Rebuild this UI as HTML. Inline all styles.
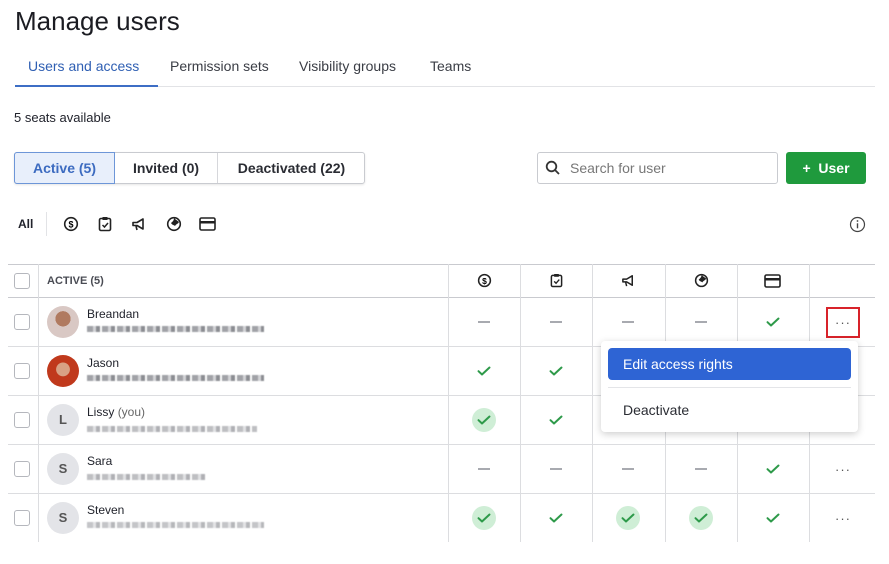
<!DOCTYPE html>
<html><head><style>
*{box-sizing:border-box;margin:0;padding:0}
body{width:889px;height:564px;background:#fff;font-family:"Liberation Sans",Arial,sans-serif;color:#21232c;position:relative;overflow:hidden}
.a{position:absolute}
.t{font-size:14px;color:#3a3d45}
.hl{position:absolute;left:8px;width:867px;height:1px;background:#dcdde0}
.vl{position:absolute;width:1px;background:#dcdde0}
.cb{position:absolute;left:14px;width:16px;height:16px;border:1.5px solid #b5b7bd;border-radius:3px;background:#fff}
.av{position:absolute;left:47px;width:32px;height:32px;border-radius:50%;background:#e3e4e8;color:#555;font-size:13px;font-weight:bold;text-align:center;line-height:32px}
.nm{position:absolute;left:87px;font-size:12px;color:#21232c}
.em{position:absolute;left:87px;height:6px;background:repeating-linear-gradient(90deg,#8a8c92 0 6px,#c8c9cd 6px 9px,#6f7178 9px 13px,#fff 13px 15px);filter:blur(0.6px);opacity:.8}
.c{position:absolute;width:72px;height:24px;display:flex;align-items:center;justify-content:center;font-size:13px}
.dash{width:12px;height:1.5px;background:#a8aab0}
.ck{width:14px;height:10px}
.cc{width:24px;height:24px;border-radius:50%;background:#cfeed6;display:flex;align-items:center;justify-content:center}
.dots{color:#555;font-size:13px;letter-spacing:1px}
</style></head><body>
<svg width="0" height="0" style="position:absolute"><defs><symbol id="k" viewBox="0 0 14 10"><path d="M1.5 5.2l3.5 3.3L12.5 1.5" fill="none" stroke="#2e9a4a" stroke-width="2" stroke-linecap="round" stroke-linejoin="round"/></symbol></defs></svg>
<div class="a" style="left:15px;top:6px;font-size:26px;color:#1b1c22">Manage users</div>
<div class="a" style="left:28px;top:58px;font-size:14px;color:#2f5fb3">Users and access</div>
<div class="a t" style="left:170px;top:58px">Permission sets</div>
<div class="a t" style="left:299px;top:58px">Visibility groups</div>
<div class="a t" style="left:430px;top:58px">Teams</div>
<div class="a" style="left:15px;top:86px;width:860px;height:1px;background:#e2e3e6"></div>
<div class="a" style="left:15px;top:85px;width:143px;height:2px;background:#3d6ec5"></div>
<div class="a" style="left:14px;top:110px;font-size:13px;color:#21232c">5 seats available</div>

<div class="a" style="left:14px;top:152px;width:351px;height:32px;border:1px solid #c9cbd0;border-radius:3px;box-shadow:0 1px 2px rgba(0,0,0,.1)"></div>
<div class="a" style="left:14px;top:152px;width:101px;height:32px;border:1px solid #6d96d8;border-radius:3px 0 0 3px;background:#e8effb;color:#3c6bc0;font-size:14px;font-weight:bold;text-align:center;line-height:30px">Active (5)</div>
<div class="a" style="left:115px;top:153px;width:103px;height:30px;border-right:1px solid #d6d7db;font-size:14px;font-weight:bold;text-align:center;line-height:30px;color:#2a2c33">Invited (0)</div>
<div class="a" style="left:218px;top:153px;width:147px;height:30px;font-size:14px;font-weight:bold;text-align:center;line-height:30px;color:#2a2c33">Deactivated (22)</div>

<div class="a" style="left:537px;top:152px;width:241px;height:32px;border:1px solid #c9cbd0;border-radius:3px"></div>
<svg class="a" style="left:545px;top:160px" width="16" height="16" viewBox="0 0 16 16"><circle cx="6.5" cy="6.5" r="4.8" fill="none" stroke="#333" stroke-width="1.8"/><path d="M10 10l4 4" stroke="#333" stroke-width="1.8"/></svg>
<div class="a" style="left:570px;top:160px;font-size:14px;color:#777">Search for user</div>
<div class="a" style="left:786px;top:152px;width:80px;height:32px;background:#1f9a3d;border-radius:3px;color:#fff;font-size:14px;font-weight:bold;line-height:32px;text-align:center">+&nbsp; User</div>

<div class="a" style="left:18px;top:217px;font-size:12px;font-weight:bold">All</div>
<div class="a" style="left:46px;top:212px;width:1px;height:24px;background:#e2e3e6"></div>
<svg class="a" style="left:63px;top:216px" width="16" height="16" viewBox="0 0 16 16"><circle cx="8" cy="8" r="6.3" fill="none" stroke="#222" stroke-width="1.6"/><text x="8" y="11.5" font-size="9" font-weight="bold" text-anchor="middle" font-family="Liberation Sans">$</text></svg>
<svg class="a" style="left:98px;top:216px" width="14" height="16" viewBox="0 0 14 16"><rect x="1.5" y="2.5" width="11" height="12" rx="1.5" fill="none" stroke="#222" stroke-width="1.6"/><rect x="4.5" y="1" width="5" height="3" fill="#222"/><path d="M4.5 9l2 2 3.5-4" fill="none" stroke="#222" stroke-width="1.5"/></svg>
<svg class="a" style="left:131px;top:216px" width="16" height="16" viewBox="0 0 16 16"><path d="M2 6.5h4l6-3.5v10l-6-3.5H2z" fill="none" stroke="#222" stroke-width="1.6" stroke-linejoin="round"/><path d="M5 10l1 4" stroke="#222" stroke-width="1.6"/></svg>
<svg class="a" style="left:166px;top:216px" width="16" height="16" viewBox="0 0 16 16"><circle cx="8" cy="8" r="6.3" fill="none" stroke="#222" stroke-width="1.6"/><path d="M8 2c2 2 4 3 5 4-1 2-3 2-4 4-1-1-3-1-4-3 1-1 3-2 3-5z" fill="#222"/></svg>
<svg class="a" style="left:199px;top:217px" width="17" height="14" viewBox="0 0 17 14"><rect x="1" y="1" width="15" height="12" rx="1.5" fill="none" stroke="#222" stroke-width="1.6"/><rect x="1" y="4" width="15" height="2.5" fill="#222"/></svg>
<svg class="a" style="left:849px;top:216px" width="17" height="17" viewBox="0 0 17 17"><circle cx="8.5" cy="8.5" r="7" fill="none" stroke="#444" stroke-width="1.2"/><rect x="7.8" y="7.3" width="1.4" height="5" fill="#444"/><circle cx="8.5" cy="5" r=".9" fill="#444"/></svg>

<div class="hl" style="top:264px;background:#c9cacf"></div>
<div class="hl" style="top:297px;background:#c9cacf"></div>
<div class="hl" style="top:346px"></div>
<div class="hl" style="top:395px"></div>
<div class="hl" style="top:444px"></div>
<div class="hl" style="top:493px"></div>
<div class="vl" style="left:38px;top:264px;height:278px"></div>
<div class="vl" style="left:448px;top:264px;height:278px"></div>
<div class="vl" style="left:520px;top:264px;height:278px"></div>
<div class="vl" style="left:592px;top:264px;height:278px"></div>
<div class="vl" style="left:665px;top:264px;height:278px"></div>
<div class="vl" style="left:737px;top:264px;height:278px"></div>
<div class="vl" style="left:809px;top:264px;height:278px"></div>

<div class="cb" style="top:273px"></div>
<div class="a" style="left:47px;top:275px;font-size:11px;font-weight:bold;color:#4a4c54">ACTIVE (5)</div>
<svg class="a" style="left:477px;top:273px" width="15" height="15" viewBox="0 0 16 16"><circle cx="8" cy="8" r="6.3" fill="none" stroke="#222" stroke-width="1.6"/><text x="8" y="11.5" font-size="9" font-weight="bold" text-anchor="middle" font-family="Liberation Sans">$</text></svg>
<svg class="a" style="left:550px;top:273px" width="13" height="15" viewBox="0 0 14 16"><rect x="1.5" y="2.5" width="11" height="12" rx="1.5" fill="none" stroke="#222" stroke-width="1.6"/><rect x="4.5" y="1" width="5" height="3" fill="#222"/><path d="M4.5 9l2 2 3.5-4" fill="none" stroke="#222" stroke-width="1.5"/></svg>
<svg class="a" style="left:621px;top:273px" width="15" height="15" viewBox="0 0 16 16"><path d="M2 6.5h4l6-3.5v10l-6-3.5H2z" fill="none" stroke="#222" stroke-width="1.6" stroke-linejoin="round"/><path d="M5 10l1 4" stroke="#222" stroke-width="1.6"/></svg>
<svg class="a" style="left:694px;top:273px" width="15" height="15" viewBox="0 0 16 16"><circle cx="8" cy="8" r="6.3" fill="none" stroke="#222" stroke-width="1.6"/><path d="M8 2c2 2 4 3 5 4-1 2-3 2-4 4-1-1-3-1-4-3 1-1 3-2 3-5z" fill="#222"/></svg>
<svg class="a" style="left:764px;top:274px" width="17" height="14" viewBox="0 0 17 14"><rect x="1" y="1" width="15" height="12" rx="1.5" fill="none" stroke="#222" stroke-width="1.6"/><rect x="1" y="4" width="15" height="2.5" fill="#222"/></svg>

<div class="cb" style="top:314px"></div>
<div class="av" style="top:306px;background:radial-gradient(circle at 50% 40%,#b07a60 0 30%,#d9c8c4 31% 100%)"></div>
<div class="nm" style="top:307px">Breandan</div>
<div class="em" style="top:326px;width:177px"></div>

<div class="cb" style="top:363px"></div>
<div class="av" style="top:355px;background:radial-gradient(circle at 50% 45%,#d8a184 0 28%,#c0391c 30% 100%)"></div>
<div class="nm" style="top:356px">Jason</div>
<div class="em" style="top:375px;width:177px"></div>

<div class="cb" style="top:412px"></div>
<div class="av" style="top:404px">L</div>
<div class="nm" style="top:405px">Lissy <span style="color:#666">(you)</span></div>
<div class="em" style="top:426px;width:170px;opacity:.55"></div>

<div class="cb" style="top:461px"></div>
<div class="av" style="top:453px">S</div>
<div class="nm" style="top:454px">Sara</div>
<div class="em" style="top:474px;width:120px;opacity:.55"></div>

<div class="cb" style="top:510px"></div>
<div class="av" style="top:502px">S</div>
<div class="nm" style="top:503px">Steven</div>
<div class="em" style="top:522px;width:177px;opacity:.5"></div>

<div class="c" style="left:448px;top:310px"><div class="dash"></div></div>
<div class="c" style="left:520px;top:310px"><div class="dash"></div></div>
<div class="c" style="left:592px;top:310px"><div class="dash"></div></div>
<div class="c" style="left:665px;top:310px"><div class="dash"></div></div>
<div class="c" style="left:737px;top:310px"><svg class="ck"><use href="#k"/></svg></div>
<div class="a" style="left:826px;top:307px;width:34px;height:31px;border:2px solid #d8232a"></div>
<div class="c dots" style="left:807px;top:310px">···</div>

<div class="c" style="left:448px;top:359px"><svg class="ck"><use href="#k"/></svg></div>
<div class="c" style="left:520px;top:359px"><svg class="ck"><use href="#k"/></svg></div>

<div class="c" style="left:448px;top:408px"><span class="cc"><svg class="ck"><use href="#k"/></svg></span></div>
<div class="c" style="left:520px;top:408px"><svg class="ck"><use href="#k"/></svg></div>

<div class="c" style="left:448px;top:457px"><div class="dash"></div></div>
<div class="c" style="left:520px;top:457px"><div class="dash"></div></div>
<div class="c" style="left:592px;top:457px"><div class="dash"></div></div>
<div class="c" style="left:665px;top:457px"><div class="dash"></div></div>
<div class="c" style="left:737px;top:457px"><svg class="ck"><use href="#k"/></svg></div>
<div class="c dots" style="left:807px;top:457px">···</div>

<div class="c" style="left:448px;top:506px"><span class="cc"><svg class="ck"><use href="#k"/></svg></span></div>
<div class="c" style="left:520px;top:506px"><svg class="ck"><use href="#k"/></svg></div>
<div class="c" style="left:592px;top:506px"><span class="cc"><svg class="ck"><use href="#k"/></svg></span></div>
<div class="c" style="left:665px;top:506px"><span class="cc"><svg class="ck"><use href="#k"/></svg></span></div>
<div class="c" style="left:737px;top:506px"><svg class="ck"><use href="#k"/></svg></div>
<div class="c dots" style="left:807px;top:506px">···</div>

<div class="a" style="left:601px;top:341px;width:257px;height:91px;background:#fff;border-radius:4px;box-shadow:0 2px 8px rgba(0,0,0,.2)"></div>
<div class="a" style="left:608px;top:348px;width:243px;height:32px;background:#2e64d4;border-radius:4px;color:#fff;font-size:14px;line-height:32px;padding-left:15px">Edit access rights</div>
<div class="a" style="left:608px;top:387px;width:243px;height:1px;background:#e4e5e8"></div>
<div class="a" style="left:623px;top:402px;font-size:14px;color:#2a2c33">Deactivate</div>
</body></html>
